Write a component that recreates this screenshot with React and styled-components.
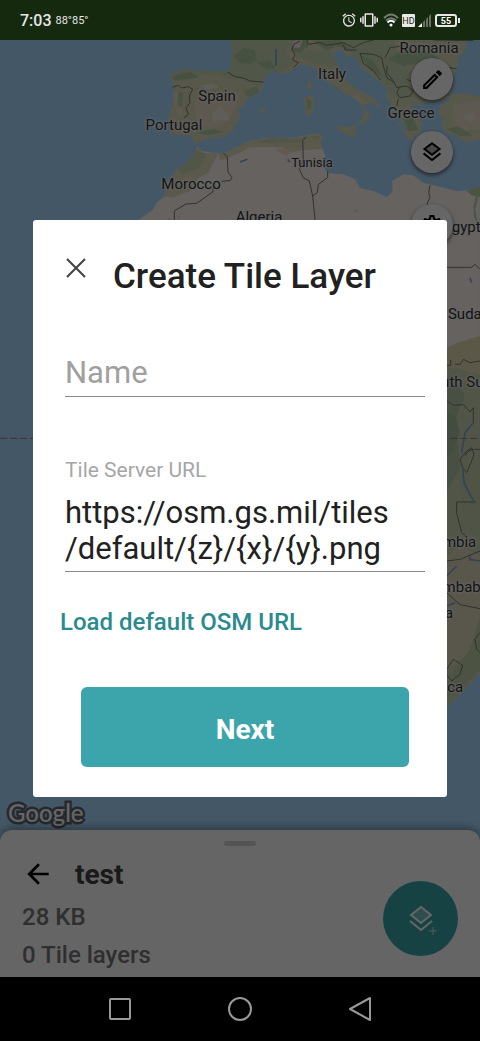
import React, { useState } from 'react';
import styled, { createGlobalStyle } from 'styled-components';
import {
    MdAlarm,
    MdArrowBack,
    MdOutlineEdit,
    MdOutlineSettings,
    MdVibration,
} from 'react-icons/md';

const DEFAULT_URL = 'https://osm.gs.mil/tiles\n/default/{z}/{x}/{y}.png';

const GlobalStyle = createGlobalStyle`
  * {
    box-sizing: border-box;
  }

  body {
    margin: 0;
    background: #000;
    font-family: Roboto, "Liberation Sans", sans-serif;
  }

  button, input, textarea {
    font-family: inherit;
  }

  button {
    padding: 0;
    border: none;
    background: none;
    cursor: pointer;
  }
`;

const Screen = styled.div`
  display: flex;
  flex-direction: column;
  min-height: 100vh;
`;

// Status bar
const StatusBar = styled.header`
  display: flex;
  align-items: center;
  justify-content: space-between;
  height: 40px;
  padding: 0 20px;
  background: #15290f;
  color: #e6e6e6;
`;

const StatusGroup = styled.div`
  display: flex;
  align-items: center;
  gap: ${(props) => props.$gap}px;
`;

const Clock = styled.span`
  font-size: 16px;
  font-weight: 500;
`;

const Weather = styled.span`
  font-size: 11px;
`;

// Map
const Stage = styled.main`
  position: relative;
  display: flex;
  flex: 1;
  flex-direction: column;
`;

const MapArea = styled.section`
  position: relative;
  flex: 1;
  overflow: hidden;
  background: #aadaff;
`;

const MapDrawing = styled.svg`
  position: absolute;
  top: 0;
  left: 0;
  width: 480px;
  height: 802px;
`;

const Place = styled.span`
  position: absolute;
  left: ${(props) => props.$x}px;
  top: ${(props) => props.$y}px;
  transform: translate(-50%, -50%);
  color: #333;
  font-size: ${(props) => (props.$small ? 13 : 15)}px;
  line-height: 14px;
  white-space: nowrap;
  text-shadow: 0 0 2px #fff, 0 0 2px #fff, 0 0 3px #fff;
`;

const MapTools = styled.div`
  position: absolute;
  top: 18px;
  right: 27px;
  display: flex;
  flex-direction: column;
  gap: 31px;
`;

const RoundButton = styled.button`
  display: flex;
  align-items: center;
  justify-content: center;
  width: 42px;
  height: 42px;
  border-radius: 50%;
  background: #fff;
  color: #000;
  box-shadow: 0 2px 4px rgba(0, 0, 0, 0.6);
`;

const Attribution = styled.span`
  position: absolute;
  left: 8px;
  bottom: 13px;
  color: #fff;
  font-family: Lato, sans-serif;
  font-size: 24px;
  font-weight: 500;
  line-height: 32px;
  -webkit-text-stroke: 5px #5d6870;
  paint-order: stroke fill;
`;

// Bottom sheet
const Sheet = styled.section`
  position: relative;
  margin-top: -12px;
  padding: 11px 22px 3px;
  border-radius: 12px 12px 0 0;
  background: #fafcfb;
  box-shadow: 0 -2px 8px rgba(0, 0, 0, 0.4);
`;

const Handle = styled.div`
  width: 32px;
  height: 5px;
  margin: 0 auto 8px;
  border-radius: 3px;
  background: #d2d2d2;
`;

const SheetHeader = styled.div`
  display: flex;
  align-items: center;
  gap: 21px;
  height: 40px;
`;

const BackButton = styled.button`
  display: flex;
  color: #000;
`;

const SheetTitle = styled.h2`
  margin: 0;
  color: #424242;
  font-size: 28px;
  font-weight: 700;
`;

const SheetRow = styled.div`
  display: flex;
  align-items: flex-start;
  justify-content: space-between;
`;

const Stats = styled.div`
  padding-top: 4px;
  color: #757779;
  font-size: 24px;
  font-weight: 500;
  line-height: 38px;
`;

const Fab = styled.button`
  display: flex;
  align-items: center;
  justify-content: center;
  width: 75px;
  height: 75px;
  margin-top: -13px;
  border-radius: 50%;
  background: #3ba5ab;
`;

// Dialog
const Scrim = styled.div`
  position: absolute;
  inset: 0;
  display: flex;
  align-items: center;
  padding: 0 33px;
  background: rgba(0, 0, 0, 0.6);
`;

const Dialog = styled.form`
  flex: 1;
  display: flex;
  flex-direction: column;
  padding: 36px 22px 30px;
  border-radius: 3px;
  background: #fff;
`;

const DialogHeader = styled.div`
  display: flex;
  align-items: flex-start;
  gap: 24px;
  padding-left: 10px;
`;

const CloseButton = styled.button`
  display: flex;
  width: 24px;
  height: 24px;
`;

const DialogTitle = styled.h1`
  margin: 0;
  color: #212121;
  font-size: 35px;
  font-weight: 500;
  line-height: 42px;
`;

const Field = styled.div`
  display: flex;
  flex-direction: column;
  margin-top: ${(props) => props.$space}px;
  padding-left: 10px;
`;

const FieldLabel = styled.label`
  margin-bottom: 12px;
  color: #a6a6a6;
  font-size: 21px;
  line-height: 26px;
`;

const NameInput = styled.input`
  width: 100%;
  height: 48px;
  padding: 0;
  border: none;
  border-bottom: 1px solid #8a8a8a;
  border-radius: 0;
  outline: none;
  color: #212121;
  font-size: 31px;

  &::placeholder {
    color: #a0a0a0;
    opacity: 1;
  }
`;

const UrlInput = styled.textarea`
  width: 100%;
  height: 77px;
  padding: 0;
  border: none;
  border-bottom: 1px solid #8a8a8a;
  border-radius: 0;
  outline: none;
  resize: none;
  overflow: hidden;
  color: #212121;
  font-size: 31px;
  line-height: 36px;
`;

const TextButton = styled.button`
  align-self: flex-start;
  margin-top: 34px;
  padding: 0 5px;
  color: #2b8a8d;
  font-size: 24px;
  font-weight: 500;
  line-height: 32px;
`;

const PrimaryButton = styled.button`
  height: 80px;
  margin: 49px 16px 0 26px;
  padding-top: 4px;
  border-radius: 6px;
  background: #3ba5ab;
  color: #fff;
  font-size: 28px;
  font-weight: 700;
`;

// System navigation
const NavBar = styled.nav`
  display: flex;
  align-items: center;
  justify-content: center;
  gap: 88px;
  height: 64px;
  background: #000;
`;

const NavButton = styled.button`
  display: flex;
  width: 32px;
  height: 32px;
`;

const places = [
    { name: 'Romania', x: 429, y: 8 },
    { name: 'Italy', x: 332, y: 34 },
    { name: 'Spain', x: 217, y: 56 },
    { name: 'Greece', x: 411, y: 73 },
    { name: 'Portugal', x: 174, y: 85 },
    { name: 'Tunisia', x: 312, y: 123, small: true },
    { name: 'Morocco', x: 191, y: 144 },
    { name: 'Algeria', x: 259, y: 177 },
    { name: 'Egypt', x: 462, y: 187 },
    { name: 'Sudan', x: 469, y: 274 },
    { name: 'South Sudan', x: 466, y: 342 },
    { name: 'Zambia', x: 451, y: 502 },
    { name: 'Zimbabwe', x: 465, y: 547 },
    { name: 'Botswana', x: 420, y: 573 },
    { name: 'South Africa', x: 422, y: 647 },
];

const WorldMap = () => (
    <MapDrawing viewBox="0 0 480 802" aria-hidden="true">
        <defs>
            <clipPath id="europe">
                <path d="M272 10L277 40 275 70 270 95 262 108 240 106 200 104 160 103 130 98 120 104 100 108 92 120 98 140 102 160 98 200 90 230 86 262 95 270 90 295 130 298 150 298 160 315 172 324 188 312 215 306 250 305 268 290 280 282 285 262 300 248 295 225 320 190 350 175 372 152 370 135 380 115 400 105 420 115 450 108 480 85 500 88 530 100 550 130 580 150 610 170 640 185 660 200 675 225 665 250 655 262 668 268 690 238 680 225 672 208 690 198 715 212 720 205 690 180 650 160 620 135 600 105 585 75 582 50 600 38 612 50 625 62 645 60 660 90 690 115 720 135 740 155 742 190 760 215 778 240 785 255 780 268 790 285 805 310 818 316 822 298 845 288 840 270 850 262 835 240 815 225 815 208 840 205 870 196 900 194 925 190 935 172 930 150 945 110 955 80 955 62 975 45 980 10ZM920 178L960 172 1020 180 1020 310 980 320 950 300 920 290 905 270 910 245 895 230 905 205 930 196ZM588 270L620 272 652 268 645 290 648 305 625 298 600 285ZM488 188L505 180 520 178 522 205 515 235 500 240 492 225 498 210ZM500 142L512 132 516 155 506 165ZM358 224L370 219 378 226 368 234ZM770 262L790 262 802 280 785 278Z" />
            </clipPath>
            <clipPath id="africa">
                <path d="M172 330L185 345 220 350 250 352 280 340 320 318 380 305 440 308 490 300 510 293 530 292 548 302 540 318 548 340 556 360 545 385 565 412 610 415 645 430 660 455 700 465 740 483 757 468 757 435 790 415 820 418 850 440 900 452 950 466 985 462 1020 450 1020 1910 975 1960 920 2015 600 1900 500 1400 200 1150 -30 900 -40 620 0 548 20 535 40 520 50 500 75 480 78 455 90 430 110 400 140 380 160 355Z" />
            </clipPath>
        </defs>
        <g transform="translate(140 -4) scale(0.33333)">
            <g clipPath="url(#europe)">
                <path fill="#dcdcb9" d="M60 0H1020V330H60Z" />
                <path fill="#c8d9b4" d="M270 10L450 10 440 50 460 80 430 110 380 110 360 155 300 130 265 125 240 118 160 115 110 125 90 145 80 90ZM465 60L500 40 570 50 610 80 580 90 530 85ZM600 10L760 10 780 80 820 110 820 190 760 190 720 120 660 80Z" />
                <path fill="#afcba6" d="M280 60L310 35 345 42 350 72 330 85 300 82ZM350 78L390 74 405 96 380 102ZM455 10L500 10 505 30 480 50 455 46ZM100 120L150 108 180 124 145 130 105 135ZM520 15L600 12 640 48 590 30 560 45ZM660 55L700 75 730 125 690 100ZM745 70L790 40 870 48 900 70 850 82 790 90ZM545 130L580 148 620 180 570 162ZM790 250L815 235 835 282 805 286Z" />
                <path fill="#eadfc9" d="M160 205L200 175 260 165 300 180 280 215 270 250 220 280 170 260ZM100 165L120 172 128 240 110 230ZM940 210L1020 190 1020 280 960 285 935 250ZM620 185L650 180 690 205 660 200Z" />
                <path fill="#f1e5dd" d="M215 235L240 213 260 232 270 255 235 250 220 262ZM455 15L490 8 480 35 460 35ZM180 150L220 142 235 155 200 160ZM970 240L1000 228 1010 248 985 260Z" />
                <path fill="#b6cfaa" d="M115 168L130 172 126 215 112 205ZM170 290L220 278 250 288 205 298ZM310 165L350 150 360 168 325 185ZM920 280L955 270 1000 300 960 300ZM500 190L515 195 512 220 502 220Z" />
            </g>
            <g clipPath="url(#africa)">
                <path fill="#fcf5f0" d="M-50 290H1020V2020H-50Z" />
                <path fill="#e3dfbd" d="M172 320L190 350 235 352 205 410 175 425 150 465 95 485 70 480 50 380ZM235 345L320 310 480 300 555 285 545 340 490 342 450 350 430 335 380 332 330 334 290 355 240 375Z" />
                <path fill="#ccd8b3" d="M165 340L200 355 180 395 130 415 110 400ZM340 318L400 305 470 308 500 304 475 320 400 322ZM510 300L545 300 530 312Z" />
                <path fill="#f7dfc9" d="M130 430L155 420 145 448 115 460ZM405 340L455 340 440 360 420 350ZM640 520L660 522 645 530Z" />
                <path fill="#bad4ab" d="M980 466L1005 448 1030 450 1030 486 995 478ZM1008 480L1014 484 1006 520 1012 560 1002 545 1000 515Z" />
                <path fill="#e4dbb4" d="M870 960L950 920 1020 900 1020 1050 870 1050Z" />
                <path fill="#c8d5b2" d="M870 980L1020 1015 1020 2020 870 2020Z" />
                <path fill="#b1c9a6" d="M880 1030L940 1020 975 1080 950 1140 960 1300 900 1400 870 1400Z" />
                <path fill="#a5bd9e" d="M905 1130L945 1140 960 1190 930 1260 905 1230Z" />
                <path fill="#c5d3af" d="M965 1310L1020 1250 1020 1500 960 1480Z" />
                <path fill="#dfdabd" d="M900 1575L960 1530 1020 1560 1020 1730 990 1850 920 1900Z" />
                <path fill="#c0cfa9" d="M1020 1750L990 1840 940 1910 920 1980 960 1960 1020 1900Z" />
            </g>
            <g fill="none" stroke="#7a7a72" strokeWidth="3">
                <path d="M98 154L115 148 125 156 145 152 158 160 148 180 150 200 138 215 145 235 132 245" />
                <path d="M262 108L285 122 310 126 330 135 370 138M460 95L475 80 458 72 465 55 455 40 462 25 480 15M500 10L505 25 540 20 560 28 610 20 640 35 670 20 700 12M610 25L615 42 650 42M660 52L700 55 725 65 730 90 740 125 765 140M660 52L670 82 700 105 722 132M735 65L750 35 790 30M742 90L740 110 760 135 770 155 800 150 820 165 810 180 780 185 770 170 778 155M775 190L770 210M800 130L850 150 900 140 940 145M895 90L950 98M880 12L1000 14" />
                <path d="M250 352L262 362 264 408 276 425 270 434 245 436M220 455L218 468 170 502 138 504 103 525V560M498 302L488 315 490 372 478 400 490 425 508 435 518 480 526 560M518 480L532 470 535 445 563 425V405M870 448L866 470 870 485 862 500 865 560" />
                <path d="M920 694H995L1005 685 1020 700M920 988H932V972M945 985L960 985 970 970 990 980 1020 975M920 1094L940 1108 970 1106 990 1128 1000 1115 1000 1160M975 1260L985 1245 1000 1240 1020 1240M960 1270L980 1245 995 1235 1002 1255 993 1280 980 1310 968 1295ZM1008 1398H950V1430L965 1490 978 1500M920 1575L960 1570 1020 1545M920 1670L960 1706 1020 1718M920 1900L940 1870 968 1888 960 1915 935 1935 920 1915ZM1020 1790L1005 1810 1010 1840 1020 1850M990 1560V1575" />
            </g>
            <g fill="none" stroke="#7fa8d8" strokeWidth="5">
                <path d="M1000 1160L975 1190 965 1250M968 1300L972 1340 990 1375 1002 1398M990 1570L1020 1575M920 1620L950 1590M945 1700L920 1710M990 725L995 740M408 40V90M300 378L322 370M443 370L450 378" />
            </g>
            <path fill="#e3dfbd" d="M80 550L92 547 84 558ZM112 542L120 539 116 548Z" />
            <path fill="none" stroke="#a07880" strokeWidth="3" strokeDasharray="22 8" d="M-420 1207H1020" />
        </g>
    </MapDrawing>
);

const WifiIcon = () => (
    <svg width="18" height="14" viewBox="-2 0 18 14" fill="none" stroke="#fff" strokeWidth="2">
        <path d="M1 5Q8-2 15 5" opacity="0.4" />
        <path d="M3 7.500Q8 3 13 7.500" opacity="0.4" />
        <path d="M4.500 9.500Q8 6 11.500 9.500" />
        <circle cx="8" cy="12" r="1.500" fill="#fff" stroke="none" />
    </svg>
);

const HdIcon = () => (
    <svg width="13" height="13" viewBox="0 0 13 13">
        <rect width="13" height="13" rx="1" fill="#e8e8e8" />
        <text x="6.500" y="10" fill="#15290f" fontSize="9" textAnchor="middle">HD</text>
    </svg>
);

const SignalIcon = () => (
    <svg width="14" height="13" viewBox="0 0 14 13" fill="#fff">
        <path d="M0 13L4 9V13Z" />
        <path d="M5 8L7 6V13H5ZM8 5L10 3V13H8ZM11 2L13 0V13H11Z" opacity="0.35" />
    </svg>
);

const BatteryIcon = () => (
    <svg width="25" height="13" viewBox="0 0 25 13">
        <rect x="1" y="1" width="20" height="11" rx="2" fill="none" stroke="#e8e8e8" strokeWidth="2" />
        <path d="M23 4H25V9H23Z" fill="#e8e8e8" />
        <text x="11" y="10" fill="#fff" fontSize="9" fontWeight="700" textAnchor="middle">55</text>
    </svg>
);

const LayersIcon = () => (
    <svg width="24" height="24" viewBox="0 0 24 24" fill="none" stroke="#000" strokeWidth="2">
        <path d="M4.500 9L12 3.200 19.500 9 12 14.800Z" fill="#000" fillOpacity="0.3" />
        <path d="M3.600 13.400L12 20 20.400 13.400" />
    </svg>
);

const CloseIcon = () => (
    <svg width="24" height="24" viewBox="0 0 24 24" stroke="#424242" strokeWidth="2">
        <path d="M2 3L20 21M20 3L2 21" />
    </svg>
);

const AddLayerIcon = () => (
    <svg width="36" height="36" viewBox="0 0 36 36" fill="none" stroke="#fff" strokeWidth="2">
        <path d="M8 14L18 6 28 14 18 22Z" fill="#fff" fillOpacity="0.3" />
        <path d="M7 20L18 29 29 20" />
        <path d="M30 26V34M26 30H34" stroke="#c8e4e6" strokeWidth="1" />
    </svg>
);

const App = () => {
    const [name, setName] = useState('');
    const [url, setUrl] = useState(DEFAULT_URL);

    const handleSubmit = (e) => {
        e.preventDefault();
    };

    return (
        <Screen>
            <GlobalStyle />
            <StatusBar>
                <StatusGroup $gap={4}>
                    <Clock>7:03</Clock>
                    <Weather>88°85°</Weather>
                </StatusGroup>
                <StatusGroup $gap={3}>
                    <MdAlarm size={16} />
                    <MdVibration size={18} />
                    <WifiIcon />
                    <HdIcon />
                    <SignalIcon />
                    <BatteryIcon />
                </StatusGroup>
            </StatusBar>

            <Stage>
                <MapArea>
                    <WorldMap />
                    {places.map((place) => (
                        <Place key={place.name} $x={place.x} $y={place.y} $small={place.small}>
                            {place.name}
                        </Place>
                    ))}
                    <MapTools>
                        <RoundButton aria-label="Edit"><MdOutlineEdit size={25} /></RoundButton>
                        <RoundButton aria-label="Layers"><LayersIcon /></RoundButton>
                        <RoundButton aria-label="Settings"><MdOutlineSettings size={24} /></RoundButton>
                    </MapTools>
                    <Attribution>Google</Attribution>
                </MapArea>

                <Sheet>
                    <Handle />
                    <SheetHeader>
                        <BackButton aria-label="Back"><MdArrowBack size={32} /></BackButton>
                        <SheetTitle>test</SheetTitle>
                    </SheetHeader>
                    <SheetRow>
                        <Stats>
                            <div>28 KB</div>
                            <div>0 Tile layers</div>
                        </Stats>
                        <Fab aria-label="Add layer"><AddLayerIcon /></Fab>
                    </SheetRow>
                </Sheet>

                <Scrim>
                    <Dialog onSubmit={handleSubmit}>
                        <DialogHeader>
                            <CloseButton type="button" aria-label="Close"><CloseIcon /></CloseButton>
                            <DialogTitle>Create Tile Layer</DialogTitle>
                        </DialogHeader>
                        <Field $space={51}>
                            <NameInput
                                aria-label="Name"
                                placeholder="Name"
                                value={name}
                                onChange={(e) => setName(e.target.value)}
                            />
                        </Field>
                        <Field $space={60}>
                            <FieldLabel htmlFor="tile-url">Tile Server URL</FieldLabel>
                            <UrlInput
                                id="tile-url"
                                rows={2}
                                spellCheck={false}
                                value={url}
                                onChange={(e) => setUrl(e.target.value)}
                            />
                        </Field>
                        <TextButton type="button" onClick={() => setUrl(DEFAULT_URL)}>
                            Load default OSM URL
                        </TextButton>
                        <PrimaryButton type="submit">Next</PrimaryButton>
                    </Dialog>
                </Scrim>
            </Stage>

            <NavBar>
                <NavButton aria-label="Recent apps">
                    <svg width="32" height="32" viewBox="0 0 32 32" fill="none" stroke="#999" strokeWidth="2">
                        <rect x="6" y="6" width="20" height="20" rx="1" />
                    </svg>
                </NavButton>
                <NavButton aria-label="Home">
                    <svg width="32" height="32" viewBox="0 0 32 32" fill="none" stroke="#999" strokeWidth="2">
                        <circle cx="16" cy="16" r="11" />
                    </svg>
                </NavButton>
                <NavButton aria-label="Back">
                    <svg width="32" height="32" viewBox="0 0 32 32" fill="none" stroke="#999" strokeWidth="2" strokeLinejoin="round">
                        <path d="M26 5V27L6 16Z" />
                    </svg>
                </NavButton>
            </NavBar>
        </Screen>
    );
};

export default App;
